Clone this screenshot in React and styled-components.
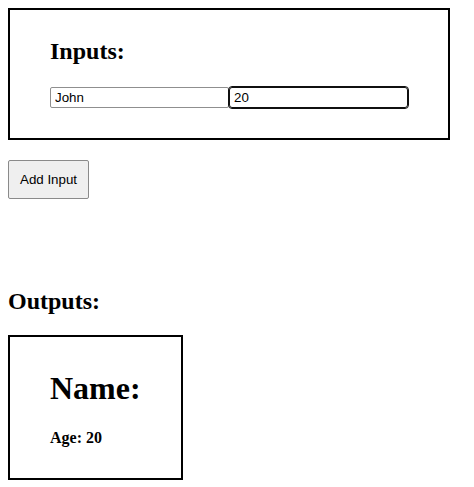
import React, { useState } from 'react';
import styled, { createGlobalStyle } from 'styled-components';

const GlobalStyle = createGlobalStyle`
body {
    margin:8px;
    background:#ffffff;
    color:#000000;
    font-family:"Liberation Serif", "Times New Roman", serif;
}
`

const InputPanel = styled.div`
width:442px;
box-sizing:border-box;
border:2px solid #000000;
padding:28px 40px 30px;
`

const Title = styled.h2`
font-size:24px;
font-weight:bold;
margin:${(props) => (props.outside ? '89px 0 20px' : '0 0 22px')};
`

const Row = styled.div`
display:flex;
`

const Field = styled.input`
width:179px;
height:21px;
box-sizing:border-box;
margin:0;
padding:1px 4px;
font-family:"Liberation Sans", Arial, sans-serif;
font-size:13.33px;
color:#000000;
background:#ffffff;
border:1px solid ${(props) => (props.active ? '#101010' : '#8f8f8f')};
border-radius:${(props) => (props.active ? '3px' : '2px')};
outline:${(props) => (props.active ? '1px solid #101010' : 'none')};
outline-offset:0;
`

const AddButton = styled.button`
display:block;
margin-top:20px;
padding:11px 11px;
font-family:"Liberation Sans", Arial, sans-serif;
font-size:13.33px;
color:#000000;
background:#efefef;
border:1px solid #8a8a8a;
border-radius:2px;
`

const OutputCard = styled.div`
width:fit-content;
border:2px solid #000000;
padding:10px 40px 10px;

h1 {
    font-size:32px;
    font-weight:bold;
    margin:23px 0 22px;
}

h4 {
    font-size:16px;
    font-weight:bold;
    margin:0 0 21px;
}
`

const App = () => {
    const [name, setName] = useState('John');
    const [age, setAge] = useState('20');

    return(
        <>
            <GlobalStyle />
            <InputPanel>
                <Title>Inputs:</Title>
                <Row>
                    <Field type="text" value={name} onChange={(e) => setName(e.target.value)} />
                    <Field type="text" active value={age} onChange={(e) => setAge(e.target.value)} />
                </Row>
            </InputPanel>
            <AddButton>Add Input</AddButton>
            <Title outside>Outputs:</Title>
            <OutputCard>
                <h1>Name:</h1>
                <h4>Age: {age}</h4>
            </OutputCard>
        </>
    )
}

export default App;
